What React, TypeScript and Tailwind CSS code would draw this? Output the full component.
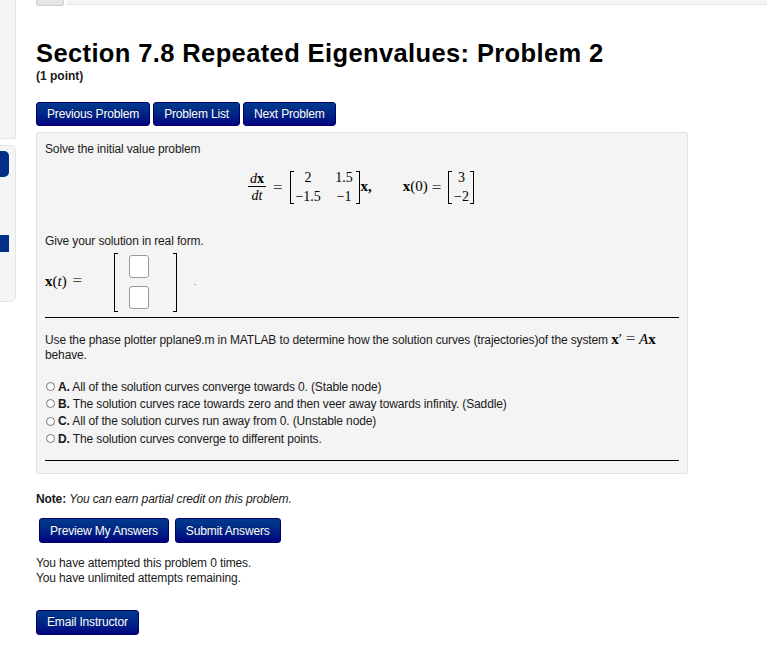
import React from 'react';

const serif = "font-['Liberation_Serif',serif]";

const NavButton: React.FC<{ label: string; className?: string }> = ({ label, className = '' }) => (
  <button className={`h-6 px-[10px] rounded-[3px] border border-[#00006a] bg-gradient-to-b from-[#003a8c] to-[#000080] text-white text-xs tracking-[-0.16px] leading-none [text-shadow:0_-1px_0_rgba(0,0,0,0.25)] ${className}`}>
    {label}
  </button>
);

const Bracket: React.FC<{ side: 'l' | 'r'; className?: string }> = ({ side, className = '' }) => (
  <span className={`block w-[4px] border-y border-black ${side === 'l' ? 'border-l' : 'border-r'} ${className}`} />
);

const Equals: React.FC<{ className?: string }> = ({ className = '' }) => (
  <span className={`text-[17px] leading-none text-[#444] ${className}`}>=</span>
);

const Choice: React.FC<{ letter: string; text: string }> = ({ letter, text }) => (
  <div className="flex items-center h-[17.3px]">
    <span className="ml-[1px] w-[9px] h-[9px] rounded-full border border-[#767676] bg-white mr-[3px]" />
    <span><b className="font-bold">{letter}.</b> {text}</span>
  </div>
);

const AnswerBox = () => <span className="block w-[20px] h-[23px] rounded-[3px] border border-[#999] bg-white" />;

export default function App() {
  return (
    <div className="flex w-[767px] h-[665px] overflow-hidden bg-white font-['Liberation_Sans',sans-serif] text-xs tracking-[-0.13px] text-[#1a1a1a]">
      {/* cut off sidebar */}
      <div className="w-[36px] shrink-0">
        <div className="w-4 h-[139px] bg-[#f5f5f5] border-r border-b border-[#e5e5e5]" />
        <div className="mt-[6px] w-4 h-[157px] bg-[#f5f5f5] border-y border-r border-[#e5e5e5] rounded-r-[5px] pt-[5px]">
          <div className="w-[9px] h-[26px] bg-[#003087] rounded-r-[5px]" />
          <div className="mt-[58px] w-[9px] h-[17px] bg-[#003087]" />
        </div>
      </div>

      <div className="w-[652px]">
        <div className="flex gap-[2px] h-[5px] w-[731px]">
          <div className="w-[28px] h-[6px] bg-[#e6e6e6] border border-t-0 border-[#cfcfcf] rounded-b-[3px]" />
          <div className="flex-1 h-[5px] bg-[#f5f5f5] border-b border-[#e5e5e5]" />
        </div>

        <h1 className="mt-[33px] text-[25.5px] leading-[30px] font-bold text-black tracking-[0.38px] whitespace-nowrap">
          Section 7.8 Repeated Eigenvalues: Problem 2
        </h1>
        <p className="mt-[1px] text-xs leading-[14px] font-bold tracking-normal text-[#1a1a1a]">(1 point)</p>

        <div className="mt-[19px] flex gap-[3px]">
          <NavButton label="Previous Problem" />
          <NavButton label="Problem List" />
          <NavButton label="Next Problem" />
        </div>

        <div className="mt-[6px] h-[342px] bg-[#f4f4f4] border border-[#e3e3e3] rounded-[2px] pl-2 pr-2 pt-[9px]">
          <p className="leading-[15px]">Solve the initial value problem</p>

          {/* equation */}
          <div className={`${serif} mt-[12px] ml-[203px] h-[36px] flex items-center text-[15px] tracking-normal text-black`}>
            <span className="flex flex-col items-center w-[18px] leading-[13px] text-[14px]">
              <span className="border-b border-black w-full text-center pb-[1px]"><i>d</i><b>x</b></span>
              <span className="pt-[2px]"><i>dt</i></span>
            </span>
            <Equals className="mx-[7px]" />
            <Bracket side="l" className="h-[33px]" />
            <span className="grid grid-cols-[29px_33px] text-center leading-[19px] text-[14px]">
              <span>2</span><span className="pl-[10px]">1.5</span><span>−1.5</span><span className="pl-[10px]">−1</span>
            </span>
            <Bracket side="r" className="h-[33px]" />
            <b className="ml-[1px]">x,</b>
            <span className="ml-[31px]"><b>x</b>(0)</span>
            <Equals className="ml-[4px] mr-[7px]" />
            <Bracket side="l" className="h-[33px]" />
            <span className="flex flex-col w-[18px] text-center leading-[19px] text-[14px]">
              <span>3</span><span>−2</span>
            </span>
            <Bracket side="r" className="h-[33px]" />
          </div>

          <p className="mt-[29px] leading-[15px]">Give your solution in real form.</p>

          <div className="mt-[3px] flex items-center h-[60px]">
            <span className={`${serif} text-[15px] tracking-normal text-black w-[69px]`}>
              <b>x</b>(<i>t</i>) <Equals className="ml-[2px]" />
            </span>
            <Bracket side="l" className="h-[59px]" />
            <span className="flex flex-col gap-[8px] ml-[11px]">
              <AnswerBox />
              <AnswerBox />
            </span>
            <span className="w-[24px]" />
            <Bracket side="r" className="h-[59px]" />
            <span className="ml-[17px] mt-[2px] text-[8px] leading-none">.</span>
          </div>

          <hr className="mt-[5px] border-t border-black" />

          <p className="mt-[12px] leading-[15px]">
            Use the phase plotter pplane9.m in MATLAB to determine how the solution curves (trajectories)of the system{' '}
            <span className={`${serif} text-[15px] leading-[15px] tracking-normal text-black`}><b>x</b>′ <Equals /> <i>A</i><b>x</b></span>{' '}
            behave.
          </p>

          <div className="mt-[15px]">
            <Choice letter="A" text="All of the solution curves converge towards 0. (Stable node)" />
            <Choice letter="B" text="The solution curves race towards zero and then veer away towards infinity. (Saddle)" />
            <Choice letter="C" text="All of the solution curves run away from 0. (Unstable node)" />
            <Choice letter="D" text="The solution curves converge to different points." />
          </div>

          <hr className="mt-[13px] border-t border-black" />
        </div>

        <p className="mt-[18px] leading-[15px]"><b>Note:</b> <i>You can earn partial credit on this problem.</i></p>

        <div className="mt-[11px] ml-[3px] flex gap-[6px]">
          <NavButton label="Preview My Answers" className="h-[25px]" />
          <NavButton label="Submit Answers" className="h-[25px]" />
        </div>

        <p className="mt-[13px] leading-[15px]">You have attempted this problem 0 times.<br />You have unlimited attempts remaining.</p>

        <NavButton label="Email Instructor" className="mt-[24px] h-[25px] pb-[2px]" />
      </div>
    </div>
  );
}
